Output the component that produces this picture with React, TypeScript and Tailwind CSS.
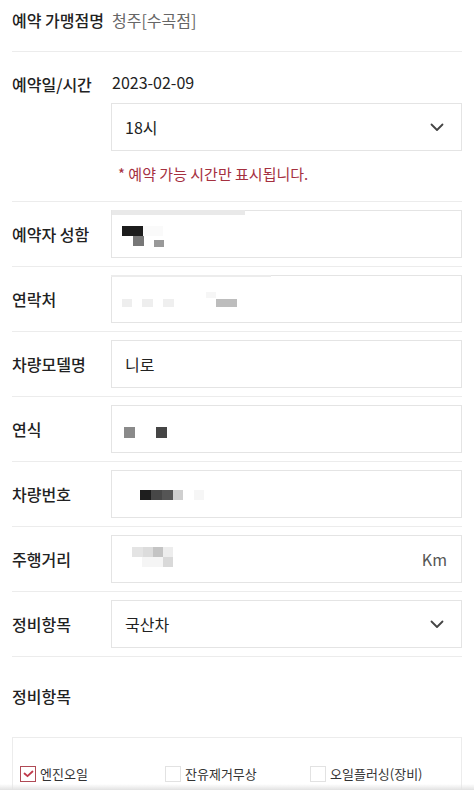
import React from 'react';

type Block = { x: number; y: number; w: number; h: number; c: string };

const font = { fontFamily: '"Noto Sans CJK KR", "Noto Sans", sans-serif' };

const Chevron = () => (
  <svg width="14" height="9" viewBox="0 0 14 9" fill="none" className="shrink-0">
    <path d="M1.5 1.5 L7 7 L12.5 1.5" stroke="#444" strokeWidth="1.8" strokeLinecap="round" strokeLinejoin="round" />
  </svg>
);

// pixelated (masked) values, offsets relative to the input box
const Masked: React.FC<{ blocks: Block[] }> = ({ blocks }) => (
  <>
    {blocks.map((b, i) => (
      <span
        key={i}
        className="absolute"
        style={{ left: b.x, top: b.y, width: b.w, height: b.h, background: b.c }}
      />
    ))}
  </>
);

const Row: React.FC<{ label: string; children: React.ReactNode }> = ({ label, children }) => (
  <div className="flex items-center border-b border-[#ececec] py-2">
    <div className="w-[99px] shrink-0 text-[16px] font-medium text-[#222]">{label}</div>
    <div className="flex-1">{children}</div>
  </div>
);

const Box: React.FC<{ children?: React.ReactNode; className?: string }> = ({ children, className = '' }) => (
  <div className={`relative flex h-[48px] items-center border border-[#e4e4e4] bg-white px-[13px] text-[16px] text-[#222] ${className}`}>
    {children}
  </div>
);

const Check: React.FC<{ label: string; checked?: boolean }> = ({ label, checked }) => (
  <label className="flex w-[145px] items-center gap-[4px] text-[13px] text-[#333]">
    <span
      className={`flex h-[16px] w-[16px] items-center justify-center border bg-white ${checked ? 'border-[#b04a55]' : 'border-[#e2e2e2]'}`}
    >
      {checked && (
        <svg width="11" height="8" viewBox="0 0 11 8" fill="none">
          <path d="M1.5 3.5 L4.5 6.2 L9.5 1.5" stroke="#c0394b" strokeWidth="1.8" strokeLinecap="round" strokeLinejoin="round" />
        </svg>
      )}
    </span>
    {label}
  </label>
);

export default function App() {
  return (
    <div className="relative min-h-[790px] w-full overflow-hidden bg-white px-3" style={font}>
      {/* 가맹점 */}
      <div className="flex items-center border-b border-[#ececec] pb-[20px] pt-[9px] leading-[22px]">
        <div className="w-[100px] shrink-0 text-[16px] font-medium text-[#222]">예약 가맹점명</div>
        <div className="text-[16px] text-[#666]">청주[수곡점]</div>
      </div>

      {/* 예약일/시간 */}
      <div className="flex border-b border-[#ececec] pb-[16px] pt-[19px]">
        <div className="w-[99px] shrink-0 pt-[2px] text-[16px] font-medium leading-[22px] text-[#222]">예약일/시간</div>
        <div className="flex-1">
          <div className="pl-px text-[16px] leading-[22px] text-[#222]">2023-02-09</div>
          <Box className="mt-[10px] justify-between pr-[17px]">
            <span>18시</span>
            <Chevron />
          </Box>
          <div className="mt-[12px] pl-[7px] text-[15px] leading-[22px] text-[#a5303f]">* 예약 가능 시간만 표시됩니다.</div>
        </div>
      </div>

      <Row label="예약자 성함">
        <Box>
          <Masked
            blocks={[
              { x: 0, y: -1, w: 133, h: 5, c: '#e9e9e9' },
              { x: 10, y: 15, w: 21, h: 10, c: '#1c1c1c' },
              { x: 31, y: 15, w: 20, h: 10, c: '#fafafa' },
              { x: 21, y: 25, w: 11, h: 10, c: '#777' },
              { x: 42, y: 29, w: 10, h: 7, c: '#999' },
            ]}
          />
        </Box>
      </Row>

      <Row label="연락처">
        <Box>
          <Masked
            blocks={[
              { x: -1, y: -1, w: 160, h: 2, c: '#ececec' },
              { x: 10, y: 23, w: 10, h: 8, c: '#eeeeee' },
              { x: 30, y: 23, w: 11, h: 8, c: '#eeeeee' },
              { x: 51, y: 23, w: 11, h: 8, c: '#efefef' },
              { x: 94, y: 16, w: 10, h: 6, c: '#f6f6f6' },
              { x: 104, y: 23, w: 21, h: 8, c: '#bdbdbd' },
            ]}
          />
        </Box>
      </Row>

      <Row label="차량모델명">
        <Box>니로</Box>
      </Row>

      <Row label="연식">
        <Box>
          <Masked
            blocks={[
              { x: 12, y: 21, w: 11, h: 11, c: '#8a8a8a' },
              { x: 44, y: 21, w: 11, h: 11, c: '#454545' },
            ]}
          />
        </Box>
      </Row>

      <Row label="차량번호">
        <Box>
          <Masked
            blocks={[
              { x: 28, y: 19, w: 11, h: 10, c: '#1e1e1e' },
              { x: 39, y: 19, w: 11, h: 10, c: '#474747' },
              { x: 50, y: 19, w: 11, h: 10, c: '#555' },
              { x: 61, y: 19, w: 10, h: 10, c: '#cfcfcf' },
              { x: 82, y: 19, w: 10, h: 10, c: '#f6f6f6' },
            ]}
          />
        </Box>
      </Row>

      <Row label="주행거리">
        <Box className="justify-end pr-[14px]">
          <Masked
            blocks={[
              { x: 20, y: 11, w: 11, h: 10, c: '#e4e4e4' },
              { x: 31, y: 11, w: 10, h: 10, c: '#dcdcdc' },
              { x: 41, y: 11, w: 10, h: 10, c: '#c4c4c4' },
              { x: 51, y: 11, w: 10, h: 10, c: '#ededed' },
              { x: 30, y: 21, w: 21, h: 10, c: '#f5f5f5' },
              { x: 51, y: 21, w: 10, h: 10, c: '#d9d9d9' },
            ]}
          />
          <span className="text-[16px] text-[#555]">Km</span>
        </Box>
      </Row>

      <Row label="정비항목">
        <Box className="justify-between pr-[17px]">
          <span>국산차</span>
          <Chevron />
        </Box>
      </Row>

      <div className="pt-[28px] text-[16px] font-medium leading-[22px] text-[#222]">정비항목</div>

      <div className="mt-[30px] border border-[#ececec] pb-[20px] pl-[7px] pt-[26px]">
        <div className="flex">
          <Check label="엔진오일" checked />
          <Check label="잔유제거무상" />
          <Check label="오일플러싱(장비)" />
        </div>
      </div>

      <div className="pointer-events-none fixed inset-x-0 bottom-0 h-[6px] bg-gradient-to-t from-[#e2e2e2] to-transparent" />
    </div>
  );
}
